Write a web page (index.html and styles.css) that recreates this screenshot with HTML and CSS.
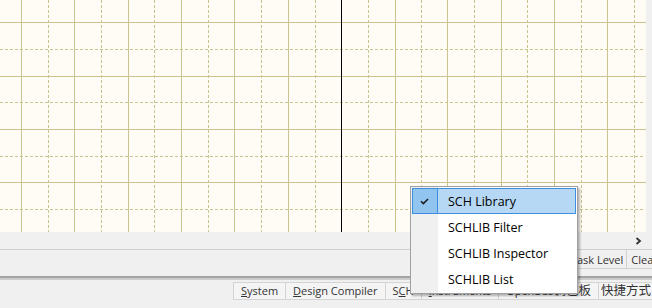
FILE: index.html
```html
<!DOCTYPE html>
<html lang="en">
<head>
  <meta charset="UTF-8">
  <title>SCH Library panel menu</title>
  <link rel="stylesheet" href="styles.css">
</head>
<body>
<div class="app">
  <div class="canvas-row">
    <div class="canvas">
      <svg class="grid" width="646" height="232" viewBox="0 0 646 232" shape-rendering="crispEdges">
        <g class="minor" stroke="#c9c390" stroke-dasharray="3 2">
          <line x1="48.5" y1="0" x2="48.5" y2="232"/>
          <line x1="101.5" y1="0" x2="101.5" y2="232"/>
          <line x1="154.5" y1="0" x2="154.5" y2="232"/>
          <line x1="208.5" y1="0" x2="208.5" y2="232"/>
          <line x1="261.5" y1="0" x2="261.5" y2="232"/>
          <line x1="315.5" y1="0" x2="315.5" y2="232"/>
          <line x1="368.5" y1="0" x2="368.5" y2="232"/>
          <line x1="421.5" y1="0" x2="421.5" y2="232"/>
          <line x1="474.5" y1="0" x2="474.5" y2="232"/>
          <line x1="527.5" y1="0" x2="527.5" y2="232"/>
          <line x1="581.5" y1="0" x2="581.5" y2="232"/>
          <line x1="634.5" y1="0" x2="634.5" y2="232"/>
          <line x1="0" y1="49.5" x2="644" y2="49.5"/>
          <line x1="0" y1="102.5" x2="644" y2="102.5"/>
          <line x1="0" y1="156.5" x2="644" y2="156.5"/>
          <line x1="0" y1="209.5" x2="644" y2="209.5"/>
        </g>
        <g class="major" stroke="#c9c390">
          <line x1="21.5" y1="0" x2="21.5" y2="232"/>
          <line x1="74.5" y1="0" x2="74.5" y2="232"/>
          <line x1="128.5" y1="0" x2="128.5" y2="232"/>
          <line x1="181.5" y1="0" x2="181.5" y2="232"/>
          <line x1="234.5" y1="0" x2="234.5" y2="232"/>
          <line x1="288.5" y1="0" x2="288.5" y2="232"/>
          <line x1="395.5" y1="0" x2="395.5" y2="232"/>
          <line x1="447.5" y1="0" x2="447.5" y2="232"/>
          <line x1="501.5" y1="0" x2="501.5" y2="232"/>
          <line x1="554.5" y1="0" x2="554.5" y2="232"/>
          <line x1="607.5" y1="0" x2="607.5" y2="232"/>
          <line x1="0" y1="22.5" x2="646" y2="22.5"/>
          <line x1="0" y1="76.5" x2="646" y2="76.5"/>
          <line x1="0" y1="129.5" x2="646" y2="129.5"/>
          <line x1="0" y1="182.5" x2="646" y2="182.5"/>
        </g>
        <line x1="341.5" y1="0" x2="341.5" y2="232" stroke="#000"/>
      </svg>
    </div>
    <div class="vscroll"></div>
  </div>

  <div class="hscroll">
    <svg class="arrow" width="7" height="8" viewBox="0 0 7 8">
      <path d="M1.5 1 L5 4 L1.5 7" fill="none" stroke="#333" stroke-width="1.8"/>
    </svg>
  </div>

  <div class="panel-bar">
    <button class="tool">Mask Level</button>
    <button class="tool">Clear</button>
  </div>

  <div class="splitter"></div>

  <div class="status">
    <span class="tab"><u>S</u>ystem</span>
    <span class="tab"><u>D</u>esign Compiler</span>
    <span class="tab">S<u>C</u>H</span>
    <span class="tab"><u>I</u>nstruments</span>
    <span class="tab">OpenBus<span class="cjk">调色板</span></span>
    <span class="tab tab-cjk"><span class="cjk">快捷方式</span></span>
    <span class="tab">  </span>
  </div>

  <div class="menu">
    <div class="item active">
      <span class="check">
        <svg width="9" height="7" viewBox="0 0 9 7">
          <path d="M1 3.2 L3.4 5.6 L8 1" fill="none" stroke="#1a1a1a" stroke-width="1.5"/>
        </svg>
      </span>
      <span class="label">SCH Library</span>
    </div>
    <div class="item">
      <span class="check"></span>
      <span class="label">SCHLIB Filter</span>
    </div>
    <div class="item">
      <span class="check"></span>
      <span class="label">SCHLIB Inspector</span>
    </div>
    <div class="item">
      <span class="check"></span>
      <span class="label">SCHLIB List</span>
    </div>
  </div>
</div>
</body>
</html>
```

FILE: styles.css
```css
body {
  margin: 0;
  font-family: 'Open Sans', 'Noto Sans CJK SC', sans-serif;
  font-size: 11px;
  background-color: #f0f0f0;
  overflow: hidden;
}
.app {
  position: relative;
  width: 652px;
  height: 308px;
  overflow: hidden;
}
.canvas-row {
  display: flex;
  height: 232px;
}
.canvas {
  width: 646px;
  height: 232px;
  background-color: #fffcf5;
}
.grid {
  display: block;
}
.vscroll {
  flex: 1;
  background-color: #f0f0f0;
}
.hscroll {
  height: 17px;
  display: flex;
  align-items: center;
  justify-content: flex-end;
  padding-right: 10px;
}
.arrow {
  display: block;
}
.panel-bar {
  height: 26px;
  border-top: 1px solid #cfcfcf;
  display: flex;
  align-items: flex-start;
  padding-left: 562px;
  white-space: nowrap;
}
.tool {
  font: inherit;
  color: #333;
  background-color: #f0f0f0;
  border: 1px solid #d2d2d2;
  border-top: none;
  border-left: none;
  height: 19px;
  padding: 0 3px 0 4px;
  margin: 0;
  flex-shrink: 0;
  line-height: 17px;
}
.tool:first-child {
  border-left: 1px solid #d2d2d2;
}
.splitter {
  height: 2px;
  background-color: #a3a3a3;
  border-bottom: 2px solid #cbcbcb;
}
.status {
  display: flex;
  padding: 2px 0 0 233px;
  white-space: nowrap;
}
.tab {
  flex-shrink: 0;
  height: 16px;
  line-height: 16px;
  padding: 0 7px;
  color: #333;
  background-color: #f4f4f4;
  border: 1px solid #d4d4d4;
  border-left: none;
}
.tab:first-child {
  border-left: 1px solid #d4d4d4;
}
.tab-cjk {
  padding: 0 2px;
}
.cjk {
  font-size: 12.5px;
}
.tab u {
  text-underline-offset: 1px;
}
.menu {
  position: absolute;
  left: 410px;
  top: 186px;
  width: 164px;
  padding: 1px;
  background: linear-gradient(to right, #f0f0f0 27px, #ffffff 27px);
  border: 1px solid #a0a0a0;
  box-shadow: 2px 2px 2px rgba(0, 0, 0, 0.28);
}
.item {
  display: flex;
  align-items: center;
  height: 26px;
  color: #000;
  font-size: 12.5px;
}
.check {
  width: 26px;
  height: 100%;
  display: flex;
  align-items: center;
  justify-content: center;
  box-sizing: border-box;
}
.check svg {
  display: block;
}
.label {
  padding-left: 10px;
}
.item.active {
  background-color: #b6d8f4;
  outline: 1px solid #3c8fe0;
  outline-offset: -1px;
}
.item.active .check {
  background-color: #91c4ee;
  border-right: 1px solid #3c8fe0;
}
```
